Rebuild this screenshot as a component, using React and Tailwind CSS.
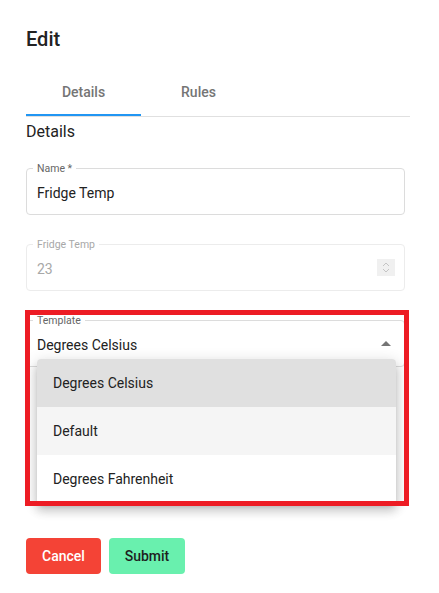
import React from "react";

function Field({ label, children, disabled, className = "" }) {
  return (
    <div
      className={
        "relative h-[47px] rounded-[4px] border flex items-center pl-[10px] pr-[9px] pt-[4px] " +
        (disabled ? "border-[#ececec] " : "border-[#dcdcdc] ") +
        className
      }
    >
      <span
        className={
          "absolute left-[6px] top-[-6px] bg-white px-[4px] text-[10.5px] leading-[11px] " +
          (disabled ? "text-[#a8a8a8]" : "text-[#666666]")
        }
      >
        {label}
      </span>
      {children}
    </div>
  );
}

export default function App() {
  return (
    <div
      className="relative w-[439px] h-[593px] bg-white overflow-hidden px-[26px]"
      style={{ fontFamily: "Roboto, 'Noto Sans', sans-serif" }}
    >
      <h2 className="pt-[27px] text-[20px] leading-[24px] font-medium text-[#222222]">Edit</h2>

      <div className="mt-[17px] w-[384px] flex border-b border-[#e0e0e0]">
        <div className="relative w-[115px] h-[48px] flex items-center justify-center text-[14px] font-medium text-[#757575]">
          Details
          <span className="absolute left-0 right-0 bottom-0 h-[2px] bg-[#2196f3]"></span>
        </div>
        <div className="w-[115px] h-[48px] flex items-center justify-center text-[14px] font-medium text-[#757575]">
          Rules
        </div>
      </div>

      <h3 className="mt-[3px] text-[16px] leading-[24px] text-[#222222]">Details</h3>

      <div className="w-[379px] mt-[24px] flex flex-col gap-[29px]">
        <Field label="Name *">
          <span className="text-[14px] text-[#222222]">Fridge Temp</span>
        </Field>

        <Field label="Fridge Temp" disabled>
          <span className="flex-1 text-[14px] text-[#a8a8a8]">23</span>
          <span className="w-[18px] h-[17px] bg-[#f0f0f0] flex flex-col items-center justify-center gap-[1px] -mt-[4px]">
            <svg width="8" height="5" viewBox="0 0 8 5">
              <path d="M1 4 L4 1 L7 4" fill="none" stroke="#c4c4c4" strokeWidth="1" />
            </svg>
            <svg width="8" height="5" viewBox="0 0 8 5">
              <path d="M1 1 L4 4 L7 1" fill="none" stroke="#c4c4c4" strokeWidth="1" />
            </svg>
          </span>
        </Field>

        <div className="relative">
          <Field label="Template" className="h-[47px]">
            <span className="flex-1 text-[14px] text-[#222222]">Degrees Celsius</span>
            <svg width="10" height="5" viewBox="0 0 10 5" className="mr-[4px] -mt-[4px]">
              <path d="M0 5 L5 0 L10 5 Z" fill="#757575" />
            </svg>
          </Field>
          <div className="absolute z-10 left-[11px] top-[39px] w-[359px] bg-white rounded-[4px] shadow-[0px_5px_5px_-3px_rgba(0,0,0,0.2),0px_8px_10px_1px_rgba(0,0,0,0.14),0px_3px_14px_2px_rgba(0,0,0,0.12)] overflow-hidden">
            <div className="h-[48px] flex items-center pl-[16px] bg-[#e0e0e0] text-[14px] text-[#222222]">Degrees Celsius</div>
            <div className="h-[48px] flex items-center pl-[16px] bg-[#f5f5f5] text-[14px] text-[#222222]">Default</div>
            <div className="h-[48px] flex items-center pl-[16px] bg-white text-[14px] text-[#222222]">Degrees Fahrenheit</div>
          </div>
        </div>
      </div>

      <div className="mt-[171px] flex gap-[8px]">
        <button className="w-[75px] h-[36px] rounded-[4px] bg-[#f44336] text-white text-[14px] font-medium">
          Cancel
        </button>
        <button className="w-[76px] h-[36px] rounded-[4px] bg-[#69f0ae] text-[#1e1e1e] text-[14px] font-medium">
          Submit
        </button>
      </div>

      <div className="absolute z-20 left-[25px] top-[310px] w-[384px] h-[196px] border-[5px] border-[#ed1c24] pointer-events-none"></div>
    </div>
  );
}
